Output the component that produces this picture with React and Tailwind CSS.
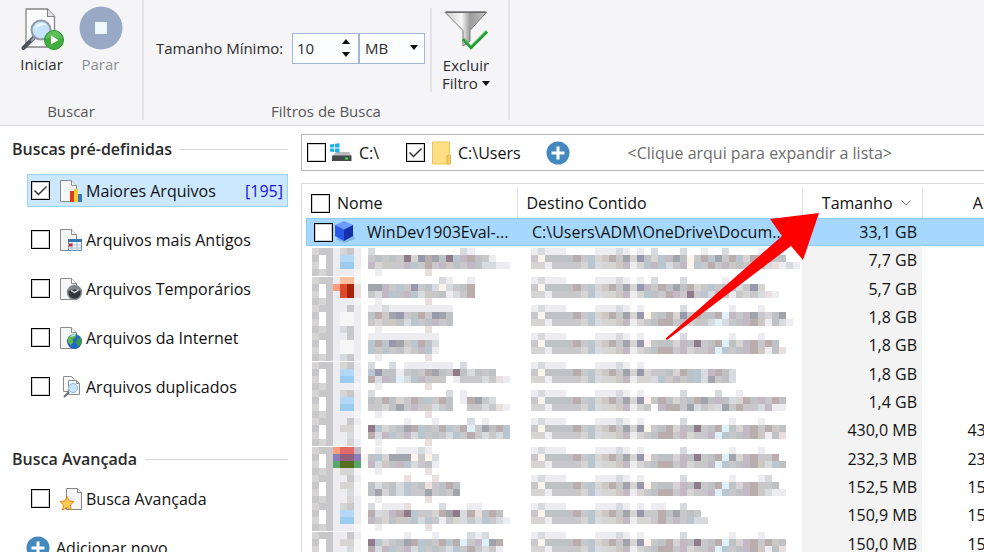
import { useState } from "react";
import clsx from "clsx";

/* ---------- data ---------- */

const PRESETS = [
  { id: "maiores", label: "Maiores Arquivos", badge: "bars", count: 195, checked: true },
  { id: "antigos", label: "Arquivos mais Antigos", badge: "calendar" },
  { id: "temporarios", label: "Arquivos Temporários", badge: "clock" },
  { id: "internet", label: "Arquivos da Internet", badge: "globe" },
  { id: "duplicados", label: "Arquivos duplicados", badge: "copies" },
];

// One letter per censored block, see PALETTE
const PALETTE = {
  a: "#ededf1",
  b: "#d7dbdf",
  c: "#c8c8cb",
  d: "#bfc2c5",
  e: "#cdc8c3",
  f: "#b9adad",
  g: "#a2a4ac",
  h: "#9898ac",
  i: "#b9c6d0",
  j: "#c3b9c4",
  k: "#fbf4ea",
  l: "#e0f0f8",
  m: "#d7d5d3",
  n: "#8f7b89",
  p: "#eadede",
  w: "#f6f6f6",
  B: "#b3d7f6",
  C: "#9ccbf1",
  R: "#ff9c7c",
  S: "#ffc0a0",
  T: "#dd4b2a",
  U: "#a8230c",
  V: "#e26a66",
  W: "#94607c",
  X: "#566f1a",
  Y: "#58a86c",
  Z: "#8c7cba",
};

const ICON_BLOCKS = {
  blue: ["mccamca", "c.caBBa", "m.caCCa", "cmcaaaw"],
  blank: ["mccaaca", "c.cawwa", "m.cawwa", "cmcabca"],
  pale: ["mccaaca", "c.cammw", "m.caabw", "cmcaama"],
  red: ["mccaSSw", "c.cRTUp", "m.caTUp", "cmcaaaw"],
  books: ["mccRVVj", "c.cZWWZk", "m.cYXXY", "cmcammw"],
};

const PATH_TOP = "abaaa....aaab";
const PATH_MID = "ckddddfcimefcgmh";
const PATH_LOW = "mmaccccmibmmejam";

const FILES = [
  {
    size: "7,7 GB", icon: "blue",
    name: ["b............ba", "cdcdcnmhfgdnijfdca", "jmeccjicfcjedcjdbbaa"],
    path: ["a.b...b..a..b....a.", "dmijgdkcfigcfimfdjcd", "ijibcjkicfcjedcjdbpaba"],
  },
  {
    size: "5,7 GB", icon: "red",
    name: ["..........ba..a", "ggjcichcdbkbcdf", "cbjidjibecdabcf"],
    path: ["a.b...b.....a.a....", "jcfdgdfmcicdjbchm", "idcfjcncibjeacmcbpa"],
  },
  {
    size: "1,8 GB", icon: "blank",
    name: ["aabaaaaaaaaa", "dfeghcdfchgd", "cmcedbicdjcd"],
    path: ["a.....b......a...a.", "kcdfmhcfddfljcjgcmdg", "cdffcjmccblbcdjfeadba"],
  },
  {
    size: "1,8 GB", icon: "blank",
    name: ["aaaaaaaaaa", "ifihgeifdb", "ieicdmcjia"],
    path: ["a.....b......a...a.", "kcddmjdncdfldmjfcfd", "cdffcjmccjlicdjfeadp"],
  },
  {
    size: "1,8 GB", icon: "blue",
    name: ["b..b.aaaaaaa.b", "ihddacdcfgdcndbdcd", "fbjdlbijcec.acccbcpa"],
    path: ["a....", "mccdmfdibjfdb", "mbiejcdibgcdb"],
  },
  {
    size: "1,4 GB", icon: "blue",
    name: ["b..........b.a.", "dcfdmcfdicfd.afgcb", "ccmdgcjcebcd..ccbcpa"],
    path: ["a.....b....b..a.", "kcfdmcdfgdjdbmfdjcfd", "c.jffcgbcmbgcfccbjaa"],
  },
  {
    size: "430,0 MB", icon: "pale",
    name: [".....a...a....b.a", "nimcdgfidcficflcgdfi", "fbjicjbicdcbicfcbcbi"],
    path: ["a.....b......a...a.", "kcdfmjdncdfldmjfcfed", "cdffcjmccjlicdjfeadp"],
  },
  {
    size: "232,3 MB", icon: "books",
    name: [".a..aaaba", "dimgggkckb", "jbedjibcda"],
    path: ["a.....b......a...a.", "kcddmjdncdflgmjfccf", "cdffcjmccjlicdjfebid"],
  },
  {
    size: "152,5 MB", icon: "pale",
    name: [".....p...p..", "dbcdbicdpcdfd", "dgmdbiccgcdcg"],
    path: ["a.....b......a...ab", "kcddmjdncdfldmjfccd", "cdffcjmccjlicdjfebaa"],
  },
  {
    size: "150,9 MB", icon: "blue",
    name: ["b.aaap....b...aa.", "fbmjfniccmfgnbfpdfd", "jcmdecibicacmbcbicba"],
    path: ["a.aa..b", "ccfdgcdc", "mcfcjcibb"],
  },
  {
    size: "150,0 MB", icon: "pale",
    name: [".....a...a....bab", "nimcdgfidcfiflcjlgf", "fbjicjbicdcbicfcbca"],
    path: ["a.....b......a...a.", "kcdfmjdncdfldmjfcfed", "cdffcjmccjlicdjfeadp"],
  },
];

/* ---------- small parts ---------- */

function Checkbox({ id, label, defaultChecked }) {
  return (
    <span className="grid shrink-0">
      <input
        id={id}
        type="checkbox"
        aria-label={label}
        defaultChecked={defaultChecked}
        className="peer col-start-1 row-start-1 size-[19px] appearance-none border border-black bg-white outline outline-[#00000030] -outline-offset-2"
      />
      <svg
        viewBox="0 0 19 19"
        className="pointer-events-none invisible col-start-1 row-start-1 size-[19px] peer-checked:visible"
      >
        <path d="M3.500 9.500 7.500 13.500 15.500 5.500" fill="none" stroke="#333" strokeWidth="1.500" />
      </svg>
    </span>
  );
}

function Blocks({ rows, cols, className }) {
  return (
    <svg
      viewBox={`0 -0.250 ${cols} 4`}
      preserveAspectRatio="none"
      shapeRendering="crispEdges"
      aria-hidden="true"
      className={clsx("block h-[28px] overflow-visible", className)}
    >
      {rows.map((row, y) =>
        [...row].map((c, x) =>
          PALETTE[c] ? (
            <rect key={`${x}-${y}`} x={x} y={y} width="1.010" height="1.010" fill={PALETTE[c]} />
          ) : null
        )
      )}
    </svg>
  );
}

function PlusIcon() {
  return (
    <svg viewBox="0 0 24 24" className="size-6 shrink-0">
      <circle cx="12" cy="12" r="11.500" fill="#4389bd" />
      <path d="M12 5.500v13M5.500 12h13" stroke="#fff" strokeWidth="3" />
    </svg>
  );
}

function Caret({ up }) {
  return (
    <svg viewBox="0 0 8 5" className="h-[5px] w-2 shrink-0">
      <path d={up ? "M0 5 4 0 8 5z" : "M0 0h8L4 5z"} fill="#111" />
    </svg>
  );
}

function StartIcon() {
  return (
    <svg viewBox="0 0 44 44" className="size-11">
      <path d="M6 3h21.500l7 7.500V41H6z" fill="#fbfbfb" stroke="#858585" strokeWidth="1.300" />
      <path d="M27.500 3v7.500h7" fill="#e5e5e5" stroke="#858585" strokeWidth="1.200" />
      <path d="M14.500 31 3.500 42" stroke="#4d535e" strokeWidth="4" strokeLinecap="round" />
      <path d="M16 30 11 35" stroke="#9aa4b4" strokeWidth="2" />
      <circle cx="21" cy="24" r="9.500" fill="#c6e2fb" stroke="#8f9aa6" strokeWidth="2" />
      <path d="M14.500 23a7 7 0 0 1 12-4c-4 0-8 1-12 4z" fill="#eaf5ff" />
      <circle cx="34" cy="34" r="9.500" fill="#3fae3f" stroke="#2f8f33" />
      <path d="M26 33a8 8 0 0 1 16 0c-5-2-11-2-16 0z" fill="#74cb6a" opacity=".6" />
      <path d="M31 29.500v9l7.500-4.500z" fill="#fff" />
    </svg>
  );
}

function StopIcon() {
  return (
    <svg viewBox="0 0 44 44" className="size-11">
      <circle cx="22" cy="22" r="21.500" fill="#98a9c5" />
      <path d="M16 16h12v12H16z" fill="#f0f8ff" />
    </svg>
  );
}

function FunnelIcon() {
  return (
    <svg viewBox="0 0 44 40" className="h-10 w-11">
      <defs>
        <linearGradient id="steel" x1="0" x2="1">
          <stop offset="0" stopColor="#c9c9c9" />
          <stop offset=".4" stopColor="#f7f7f7" />
          <stop offset=".6" stopColor="#9c9c9c" />
          <stop offset="1" stopColor="#c4c4c4" />
        </linearGradient>
      </defs>
      <path d="M.700 2h42L26 20.500V31l-7 5V20.500z" fill="url(#steel)" stroke="#7c7c7c" />
      <path d="M2 2.300h39.500" stroke="#6b6b6b" strokeWidth="1.600" />
      <path d="m19 29 8 8.500 16-16" fill="none" stroke="#239a35" strokeWidth="3.200" />
      <path d="m20 29 7 7 15-15" fill="none" stroke="#4dc04d" />
    </svg>
  );
}

function DocIcon({ badge }) {
  if (badge === "copies") {
    return (
      <svg viewBox="0 0 24 24" className="size-6 shrink-0">
        <path d="M4.500 1.500h8l3 3v12h-11z" fill="#f7f7f7" stroke="#8a8a8a" />
        <path d="M9.500 5.500h8l3 3v11h-11z" fill="#f7f7f7" stroke="#8a8a8a" />
        <path d="M17.500 5.500v3h3" fill="none" stroke="#8a8a8a" />
        <circle cx="14" cy="13" r="4.500" fill="#c9e5fb" stroke="#8fbcdd" />
        <path d="m10 17-5 5" stroke="#66707c" strokeWidth="2.200" />
      </svg>
    );
  }
  if (badge === "star") {
    return (
      <svg viewBox="0 0 24 24" className="size-6 shrink-0">
        <path d="M7.500 1.500h11l4 4v17h-15z" fill="#f6f6f6" stroke="#858585" />
        <path d="M18.500 1.500v4h4" fill="#fff" stroke="#858585" />
        <path d="m8 9.500 2 4.500 5 .500-3.700 3.500 1 5L8 20.500 3.500 23l1-5L1 14.500l5-.500z" fill="#ffcb55" stroke="#e08520" />
      </svg>
    );
  }
  return (
    <svg viewBox="0 0 24 24" className="size-6 shrink-0">
      <path d="M1.500 1.500h11l5 5v16h-16z" fill="#f6f6f6" stroke="#8a8a8a" />
      <path d="M12.500 1.500v5h5" fill="#fff" stroke="#8a8a8a" />
      {badge === "bars" && (
        <>
          <path d="M11 12h4v11h-4z" fill="#d9401a" />
          <path d="M15 10h4v13h-4z" fill="#f7cf3d" />
          <path d="M19 15h4v8h-4z" fill="#3c78b4" />
        </>
      )}
      {badge === "calendar" && (
        <>
          <path d="M9.500 11.500h13v11h-13z" fill="#fff" stroke="#5c87ae" />
          <path d="M9 11h14v3H9z" fill="#3577b5" />
          <path d="M9 17h14M9 20h14M13 14v9M18 14v9" stroke="#9db8cf" />
          <path d="M10 15.500h3.500v3H10z" fill="#d9202f" />
        </>
      )}
      {badge === "clock" && (
        <>
          <circle cx="15.500" cy="15.500" r="7" fill="#33373a" stroke="#8c9194" strokeWidth="1.500" />
          <path d="M9.500 14a6 6 0 0 1 12 0c-4-2-8-2-12 0z" fill="#82888c" />
          <path d="m12 13.500 3.500 2 4-2.500" fill="none" stroke="#e8e8e8" strokeWidth="1.300" />
        </>
      )}
      {badge === "globe" && (
        <>
          <circle cx="15.500" cy="15.500" r="7.500" fill="#2168c6" />
          <path d="M9 12.500c2-4 6-5 8.500-4l-1 3-3 1.500 1 3-2.500 3c-2-1-3.500-3.500-3-6.500z" fill="#62b94c" />
          <path d="m18.500 12 4 .500c1 3-.500 6-3 8l-2.500-4z" fill="#3b9b4b" />
          <path d="M11 11c2-2.500 4-3 6-2.500-1 1.500-3 2-6 2.500z" fill="#c4ecf5" />
        </>
      )}
    </svg>
  );
}

function DriveIcon() {
  return (
    <svg viewBox="0 0 22 20" className="h-5 w-[22px] shrink-0">
      <path d="M6 9h13l2.500 4h-19z" fill="#b7b9bb" />
      <path d="M2 12.500h19.500V18H2z" fill="#44484b" />
      <path d="M15 14.500h3v2h-3z" fill="#43e04d" />
      <path d="M0 1.500 4 1v3.500H0zM5 .800 9.500.300v4.200H5zM0 5.500h4V9l-4-.500zM5 5.500h4.500v4L5 9z" fill="#17b3ee" />
    </svg>
  );
}

function FolderIcon() {
  return (
    <svg viewBox="0 0 19 24" className="h-6 w-[19px] shrink-0">
      <path d="M.500 1h17v22H.500z" fill="#ffdf83" stroke="#edc35c" />
      <path d="M15 14.500h3.500V23H15z" fill="#f7cb60" stroke="#e3b24a" />
    </svg>
  );
}

function CubeIcon() {
  return (
    <svg viewBox="0 0 22 24" className="h-6 w-[22px] shrink-0">
      <path d="m3 19 8 4 11-4-3-9z" fill="#5d8fc4" opacity=".5" />
      <path d="m11 1 9 4-9 4.500L2 5z" fill="#6b9bff" />
      <path d="m2 5 9 4.500V21L2 16z" fill="#2c58ea" />
      <path d="m20 5-9 4.500V21l9-5z" fill="#1430a8" />
    </svg>
  );
}

function GroupTitle({ children }) {
  return <div className="text-center text-[15px] leading-[18px] text-[#555]">{children}</div>;
}

/* ---------- page areas ---------- */

function Ribbon() {
  const [min, setMin] = useState(10);

  return (
    <header className="flex h-[126px] border-b border-[#dcdcde] bg-[#f5f5f8] pb-[5px] text-[15px] text-[#2b2b2b]">
      <section className="flex w-36 shrink-0 flex-col justify-between border-r-2 border-[#e3e3e6]">
        <div className="flex justify-center gap-[15px] pt-[6px]">
          <button className="flex w-11 flex-col items-center leading-5">
            <StartIcon />
            <span className="pt-1">Iniciar</span>
          </button>
          <button className="flex w-11 flex-col items-center leading-5 text-[#8f8f8f]" disabled>
            <StopIcon />
            <span className="pt-1">Parar</span>
          </button>
        </div>
        <GroupTitle>Buscar</GroupTitle>
      </section>

      <section className="flex w-[366px] shrink-0 flex-col justify-between border-r-2 border-[#e3e3e6]">
        <div className="flex pt-2 pl-3">
          <div className="flex h-20 flex-1 items-center">
            <label htmlFor="min" className="w-[136px] shrink-0">Tamanho Mínimo:</label>
            <div className="flex h-[31px] w-[67px] items-center justify-between border border-[#a3b6da] bg-[#fbfeff] pr-2 pl-1">
              <input
                id="min"
                value={min}
                onChange={(e) => setMin(Number(e.target.value) || 0)}
                className="w-9 bg-transparent outline-none"
              />
              <span className="flex flex-col gap-2">
                <button aria-label="Aumentar" onClick={() => setMin(min + 1)}><Caret up /></button>
                <button aria-label="Diminuir" onClick={() => setMin(Math.max(0, min - 1))}><Caret /></button>
              </span>
            </div>
            <div className="grid h-[31px] w-[66px] items-center border border-[#a3b6da] bg-[#fbfeff]">
              <select aria-label="Unidade" className="col-start-1 row-start-1 h-full appearance-none pl-[5px] outline-none" defaultValue="MB">
                <option>KB</option>
                <option>MB</option>
                <option>GB</option>
              </select>
              <span className="pointer-events-none col-start-1 row-start-1 mr-[6px] justify-self-end pb-[2px]"><Caret /></span>
            </div>
          </div>
          <button className="flex w-[78px] flex-col items-center border-l-2 border-[#e3e3e6] pt-[2px] pr-2 leading-[18px]">
            <FunnelIcon />
            <span className="pt-[6px]">Excluir</span>
            <span className="flex items-center gap-1">Filtro <Caret /></span>
          </button>
        </div>
        <GroupTitle>Filtros de Busca</GroupTitle>
      </section>
    </header>
  );
}

function SectionTitle({ children }) {
  return (
    <h2 className="flex items-center gap-2 pl-3 leading-5 font-semibold text-[#2b2b2b] after:h-px after:flex-1 after:bg-[#d4d4d4]">
      {children}
    </h2>
  );
}

function SideItem({ id, label, badge, count, checked }) {
  return (
    <li
      className={clsx(
        "ml-[27px] flex h-[33px] items-center border pr-1 pl-[3px]",
        checked ? "border-[#99d1ff] bg-[#cce8ff]" : "border-transparent"
      )}
    >
      <Checkbox id={id} defaultChecked={checked} />
      <label htmlFor={id} className="flex flex-1 items-center gap-[3px] pl-[9px]">
        <DocIcon badge={badge} />
        {label}
      </label>
      {count && <span className="text-[#1a12e0]">[{count}]</span>}
    </li>
  );
}

function Sidebar() {
  return (
    <aside className="w-[300px] shrink-0 pt-[13px] pr-3">
      <SectionTitle>Buscas pré-definidas</SectionTitle>
      <ul className="flex flex-col gap-4 pt-[15px] pb-[46px]">
        {PRESETS.map((item) => (
          <SideItem key={item.id} {...item} />
        ))}
      </ul>
      <SectionTitle>Busca Avançada</SectionTitle>
      <ul className="pt-[13px] pb-[21px]">
        <SideItem id="avancada" label="Busca Avançada" badge="star" />
      </ul>
      <button className="ml-[26px] flex items-center gap-[6px]">
        <PlusIcon />
        Adicionar novo
      </button>
    </aside>
  );
}

function PathBar() {
  return (
    <div className="flex h-[38px] items-center border border-r-0 border-[#b5b5b5] pl-[5px] whitespace-nowrap">
      <Checkbox id="drive" />
      <label htmlFor="drive" className="flex w-20 items-center gap-[7px] pl-1">
        <DriveIcon /> C:\
      </label>
      <Checkbox id="users" defaultChecked />
      <label htmlFor="users" className="flex items-center gap-[7px] pl-[7px]">
        <FolderIcon /> C:\Users
      </label>
      <button aria-label="Adicionar pasta" className="ml-[25px]"><PlusIcon /></button>
      <button className="ml-[58px] text-[#6d6d6d]">&lt;Clique arqui para expandir a lista&gt;</button>
    </div>
  );
}

function FileTable() {
  return (
    <div className="overflow-hidden border-t border-l border-[#d5d9dc] pt-1 pl-1">
      <table className="w-[736px] table-fixed border-collapse whitespace-nowrap">
        <colgroup>
          <col className="w-[211px]" />
          <col className="w-[285px]" />
          <col className="w-[120px]" />
          <col className="w-[120px]" />
        </colgroup>
        <thead>
          <tr className="h-[30px] text-left *:border-r *:border-[#e2e2e2] *:p-0 *:font-normal">
            <th>
              <span className="flex items-center gap-[7px] pl-[5px]">
                <Checkbox label="Selecionar todos" />
                Nome
              </span>
            </th>
            <th><span className="pl-[9px]">Destino Contido</span></th>
            <th aria-sort="descending">
              <span className="flex items-center justify-end gap-2 pr-[11px]">
                Tamanho
                <svg viewBox="0 0 10 6" className="h-[6px] w-[10px]">
                  <path d="m.500.500 4.500 4.500L9.500.500" fill="none" stroke="#777" />
                </svg>
              </span>
            </th>
            <th><span className="block pr-[9px] text-right">Alocado</span></th>
          </tr>
        </thead>
        <tbody className="[&_td]:p-0">
          <tr className="h-[28px] bg-[#a6d8ff] outline outline-[#8ecbfb] -outline-offset-1">
            <td>
              <span className="flex items-center pl-2">
                <Checkbox label="Selecionar WinDev1903Eval" />
                <CubeIcon />
                <span className="pl-3">WinDev1903Eval-...</span>
              </span>
            </td>
            <td><span className="block truncate pr-3 pl-[15px]">C:\Users\ADM\OneDrive\Documentos</span></td>
            <td className="text-right"><span className="pr-[5px]">33,1 GB</span></td>
            <td className="text-right"><span>33,1 GB</span></td>
          </tr>
          {FILES.map((file, i) => (
            <tr key={i} className="h-[28px] nth-[3n]:h-[29px]">
              <td>
                <div className="flex pl-[6px]">
                  <Blocks rows={ICON_BLOCKS[file.icon]} cols={8} className="w-14 shrink-0" />
                  <Blocks rows={[...file.name, ".a......p"]} cols={20} className="w-[142px] shrink-0" />
                </div>
              </td>
              <td>
                <Blocks
                  rows={[PATH_TOP + "a." + file.path[0], PATH_MID + file.path[1], PATH_LOW + file.path[2]]}
                  cols={38}
                  className="ml-[14px] w-[269px]"
                />
              </td>
              <td className="bg-[#f3f3f3] text-right"><span className="pr-[5px]">{file.size}</span></td>
              <td className="text-right"><span className="pr-[5px]">{file.size}</span></td>
            </tr>
          ))}
        </tbody>
      </table>
    </div>
  );
}

export default function App() {
  return (
    <div className="flex h-screen flex-col overflow-hidden bg-white font-['Open_Sans',sans-serif] text-base leading-6 text-[#111]">
      <Ribbon />
      <div className="flex min-h-0 flex-1">
        <Sidebar />
        <main className="relative flex min-w-0 flex-1 flex-col gap-3 overflow-hidden pt-2 pl-px">
          <PathBar />
          <FileTable />
          {/* red pointer over the size column */}
          <svg viewBox="0 0 154 128" className="pointer-events-none absolute top-[87px] left-[365px] h-32 w-[154px]">
            <path d="M154 0 105 6l12 17L.500 125.500l1.500 1.500L126 33l12 14z" fill="#fe0000" />
          </svg>
        </main>
      </div>
    </div>
  );
}
